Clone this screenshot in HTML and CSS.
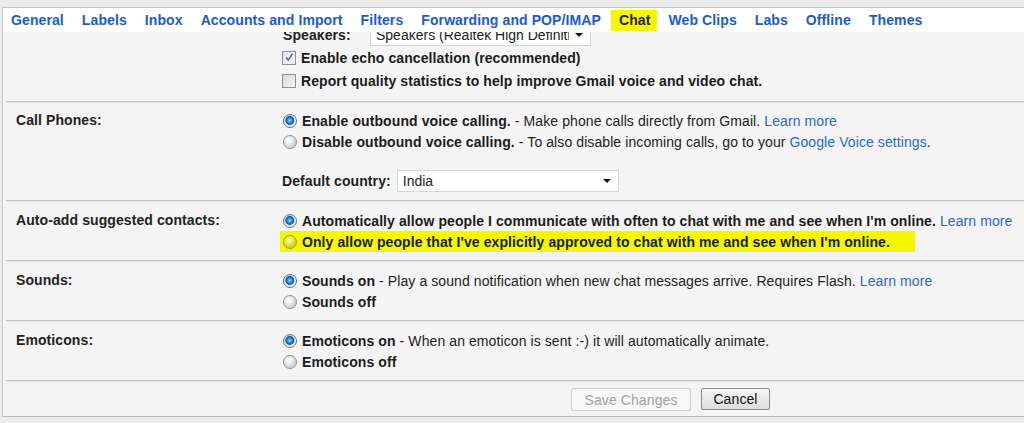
FILE: index.html
```html
<!DOCTYPE html>
<html>
<head>
<meta charset="utf-8">
<link rel="stylesheet" href="styles.css">
</head>
<body>
<div class="panel">
  <nav class="tabs">
    <span class="tab">General</span>
    <span class="tab">Labels</span>
    <span class="tab">Inbox</span>
    <span class="tab">Accounts and Import</span>
    <span class="tab">Filters</span>
    <span class="tab">Forwarding and POP/IMAP</span>
    <span class="tab active">Chat</span>
    <span class="tab">Web Clips</span>
    <span class="tab">Labs</span>
    <span class="tab">Offline</span>
    <span class="tab">Themes</span>
  </nav>
  <div class="content">
    <section class="section first">
      <div class="label"></div>
      <div class="options">
        <div class="opt speakers">
          <span class="field-label">Speakers:</span>
          <span class="select sp-select">Speakers (Realtek High Definiti<i class="caret"></i></span>
        </div>
        <div class="opt echo">
          <span class="check on"><svg viewBox="0 0 13 13" width="11" height="11"><path d="M2.5 6.5 L5 9.5 L10 2" fill="none" stroke="#3f5fa8" stroke-width="1.7"/></svg></span>
          <b>Enable echo cancellation (recommended)</b>
        </div>
        <div class="opt report">
          <span class="check"></span>
          <b>Report quality statistics to help improve Gmail voice and video chat.</b>
        </div>
      </div>
    </section>

    <section class="section calls">
      <div class="label">Call Phones:</div>
      <div class="options">
        <div class="opt"><span class="radio on"></span><span><b>Enable outbound voice calling.</b> - Make phone calls directly from Gmail. <a class="link">Learn more</a></span></div>
        <div class="opt"><span class="radio"></span><span><b>Disable outbound voice calling.</b> - To also disable incoming calls, go to your <a class="link">Google Voice settings</a>.</span></div>
        <div class="opt country">
          <span class="country-label">Default country:</span>
          <span class="select c-select">India<i class="caret"></i></span>
        </div>
      </div>
    </section>

    <section class="section">
      <div class="label">Auto-add suggested contacts:</div>
      <div class="options">
        <div class="opt"><span class="radio on"></span><span><b>Automatically allow people I communicate with often to chat with me and see when I'm online.</b> <a class="link">Learn more</a></span></div>
        <div class="opt hl"><span class="radio off-hl"></span><b>Only allow people that I've explicitly approved to chat with me and see when I'm online.</b></div>
      </div>
    </section>

    <section class="section">
      <div class="label">Sounds:</div>
      <div class="options">
        <div class="opt"><span class="radio on"></span><span><b>Sounds on</b> - Play a sound notification when new chat messages arrive. Requires Flash. <a class="link">Learn more</a></span></div>
        <div class="opt"><span class="radio"></span><b>Sounds off</b></div>
      </div>
    </section>

    <section class="section">
      <div class="label">Emoticons:</div>
      <div class="options">
        <div class="opt"><span class="radio on"></span><span><b>Emoticons on</b> - When an emoticon is sent :-) it will automatically animate.</span></div>
        <div class="opt"><span class="radio"></span><b>Emoticons off</b></div>
      </div>
    </section>

    <section class="section buttons">
      <button class="btn save" disabled>Save Changes</button>
      <button class="btn cancel">Cancel</button>
    </section>
  </div>
</div>
</body>
</html>
```

FILE: styles.css
```css
html, body {
  margin: 0;
  padding: 0;
}
body {
  background: #ececec;
  height: 423px;
  overflow: hidden;
  font-family: "Liberation Sans", Arial, sans-serif;
  font-size: 14px;
  letter-spacing: 0.09px;
  color: #222;
}
.panel {
  margin: 7px 0 0 2px;
  border-top: 1px solid #c4c4c4;
  border-left: 1px solid #c4c4c4;
  border-bottom: 1px solid #bdbdbd;
  background: #f4f4f4;
  height: 408px;
}
.tabs {
  height: 24px;
  background: #fff;
  display: flex;
  align-items: center;
  gap: 18px;
  padding-left: 8px;
  font-weight: bold;
  color: #1a5bd0;
  white-space: nowrap;
  letter-spacing: 0.1px;
}
.tab.active {
  color: #222;
  background: #f6f600;
  padding: 0 7px 0 8px;
  margin: 0 -7px 0 -8px;
  height: 21px;
  line-height: 21px;
}
.content {
  height: 384px;
  overflow: hidden;
}
.section {
  display: grid;
  grid-template-columns: 276px 1fr;
  margin-left: 3px;
  border-top: 1px solid #c6c6c6;
  box-shadow: inset 0 1px 0 #e2e2e2;
  padding: 9px 0 8px;
}
.section.first {
  border-top: none;
  box-shadow: none;
  margin-top: -8px;
  padding: 0 0 10px;
}
.section.calls {
  padding-top: 8px;
}
.label {
  padding-left: 10px;
  font-weight: bold;
  line-height: 21px;
  white-space: nowrap;
}
.options {
  display: flex;
  flex-direction: column;
}
.opt {
  display: flex;
  align-items: center;
  height: 21px;
  gap: 5px;
  white-space: nowrap;
  padding-left: 1px;
}
b {
  font-weight: bold;
  color: #1c1c1c;
}
.link {
  color: #2a66d4;
  text-decoration: none;
}
.speakers {
  height: 22px;
  gap: 0;
}
.field-label {
  font-weight: bold;
  width: 87px;
}
.echo {
  margin-top: 1px;
  padding-left: 0;
}
.report {
  margin-top: 2px;
  padding-left: 0;
}
.country {
  margin-top: 18px;
  height: 22px;
  padding-left: 0;
  gap: 6px;
}
.country-label {
  font-weight: bold;
}
.select {
  position: relative;
  display: flex;
  align-items: center;
  box-sizing: border-box;
  height: 22px;
  background: #fff;
  border: 1px solid #d6d6d6;
  padding-left: 5px;
  overflow: hidden;
  color: #222;
  letter-spacing: 0;
}
.sp-select {
  width: 221px;
  padding-right: 20px;
}
.c-select {
  width: 222px;
}
.caret {
  position: absolute;
  right: 7px;
  top: 8px;
  width: 0;
  height: 0;
  border-left: 4px solid transparent;
  border-right: 4px solid transparent;
  border-top: 4px solid #111;
}
.sp-select .caret {
  background: #fff;
  box-shadow: 0 0 0 6px #fff;
}
.check {
  box-sizing: border-box;
  width: 14px;
  height: 14px;
  border: 1px solid #8e8f8f;
  background: linear-gradient(135deg, #d8d8d8, #f7f7f7);
  display: flex;
  align-items: center;
  justify-content: center;
  flex: none;
}
.check.on {
  background: linear-gradient(135deg, #dfe4ee, #fafafa);
}
.radio {
  box-sizing: border-box;
  width: 14px;
  height: 14px;
  border-radius: 50%;
  border: 1px solid #8f9090;
  background: radial-gradient(circle at 40% 35%, #ffffff 0, #f0f0f0 3px, #d2d2d2 7px);
  flex: none;
}
.radio.on {
  border-color: #5f7487;
  background: radial-gradient(circle at 48% 45%, #a6e4ff 0, #2f9ae0 2px, #0d5b9c 4px, #b9c6d2 4.7px, #f6f6f6 5.8px, #dedede 7px);
}
.radio.off-hl {
  background: radial-gradient(circle at 40% 35%, #f8f8c0 0, #eaea40 4px, #cfcf20 7px);
  border-color: #9a9a50;
}
.opt.hl {
  align-self: flex-start;
  background: #f6f600;
  margin-left: -2px;
  padding-left: 3px;
  padding-right: 25px;
}
.section.buttons {
  display: flex;
  gap: 10px;
  padding: 7px 0 0 565px;
}
.btn {
  font-family: "Liberation Sans", Arial, sans-serif;
  font-size: 14px;
  letter-spacing: 0.1px;
  box-sizing: border-box;
  height: 23px;
  border-radius: 2px;
  padding: 0;
}
.btn.save {
  width: 120px;
  border: 1px solid #cfcfcf;
  background: #f8f8f8;
  color: #a2a2a2;
}
.btn.cancel {
  width: 69px;
  height: 22px;
  border: 1px solid #8c8c8c;
  background: linear-gradient(#f7f7f7, #dcdcdc);
  color: #111;
}
```
